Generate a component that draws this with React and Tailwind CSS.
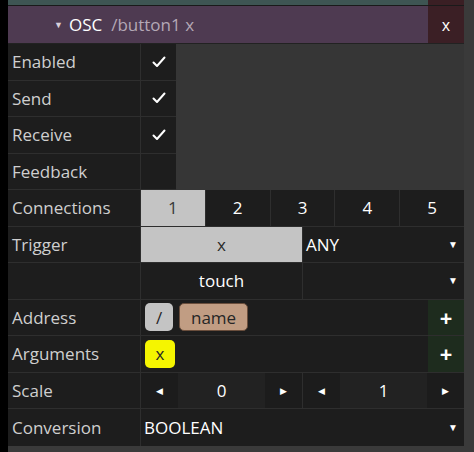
import React from 'react';

const font = { fontFamily: '"Open Sans", "Noto Sans", sans-serif' };

function Label({ children }) {
  return (
    <div className="w-[133px] shrink-0 flex items-center pl-[4px] bg-[#1d1d1d] text-[#cfcfcf] text-[17px] border-r border-[#2e2e2e]">
      {children}
    </div>
  );
}

function Row({ label, children, last }) {
  return (
    <div className={'flex h-[36.5px] ' + (last ? '' : 'border-b border-[#2e2e2e]')}>
      <Label>{label}</Label>
      <div className="flex-1 flex min-w-0">{children}</div>
    </div>
  );
}

function Caret() {
  return <span className="text-[10px] text-white">▼</span>;
}

function Select({ value, className = '' }) {
  return (
    <div className={'flex items-center justify-between pl-[3px] pr-[6px] bg-[#1d1d1d] text-white text-[17px] ' + className}>
      <span>{value}</span>
      <Caret />
    </div>
  );
}

function Stepper({ value }) {
  return (
    <div className="flex-1 flex">
      <div className="w-[37px] flex items-center justify-center bg-[#1c1c1c] text-white text-[9px]">◀</div>
      <div className="flex-1 flex items-center justify-center bg-[#222222] text-white text-[17px]">{value}</div>
      <div className="w-[37px] flex items-center justify-center bg-[#1c1c1c] text-white text-[9px]">▶</div>
    </div>
  );
}

function Check() {
  return (
    <svg width="14" height="12" viewBox="0 0 14 12" fill="none">
      <path d="M1.5 6.5 L5 10 L12.5 1.5" stroke="white" strokeWidth="2" strokeLinecap="round" strokeLinejoin="round" />
    </svg>
  );
}

function CheckRow({ label, checked }) {
  return (
    <div className="flex h-[36.5px]">
      <div className="flex border-b border-[#2e2e2e]">
        <Label>{label}</Label>
        <div className="w-[35px] flex items-center justify-center bg-[#1d1d1d]">
          {checked ? <Check /> : null}
        </div>
      </div>
      <div className="flex-1 bg-[#363636]" />
    </div>
  );
}

export default function App() {
  return (
    <div className="w-[474px] h-[452px] bg-black flex overflow-hidden" style={font}>
      <div className="w-[8px] shrink-0 bg-black" />
      <div className="w-[456px] shrink-0 flex flex-col">
        <div className="h-[6px] flex border-b border-[#1a1a1a]">
          <div className="flex-1 bg-[#3e5553]" />
          <div className="w-[36px] bg-[#3a1f24]" />
        </div>
        <div className="h-[38px] flex bg-[#4e3a51] border-b border-[#222]">
          <div className="flex-1 flex items-center pl-[46px] gap-[6px]">
            <span className="text-[9px] text-[#d8d0da]">▼</span>
            <span className="text-[17px] text-white">OSC</span>
            <span className="text-[17px] text-[#b4a8b6] ml-[3px]">/button1 x</span>
          </div>
          <div className="w-[36px] flex items-center justify-center bg-[#3b1f25] text-white text-[16px]">x</div>
        </div>

        <CheckRow label="Enabled" checked />
        <CheckRow label="Send" checked />
        <CheckRow label="Receive" checked />
        <CheckRow label="Feedback" />

        <Row label="Connections">
          <div className="flex-1 grid grid-cols-5 gap-px bg-[#2e2e2e]">
            {[1, 2, 3, 4, 5].map((n) => (
              <div
                key={n}
                className={
                  'flex items-center justify-center text-[17px] ' +
                  (n === 1 ? 'bg-[#c4c4c4] text-[#3a3a3a]' : 'bg-[#1d1d1d] text-white')
                }
              >
                {n}
              </div>
            ))}
          </div>
        </Row>

        <Row label="Trigger">
          <div className="w-[161px] flex items-center justify-center bg-[#c4c4c4] text-[#2a2a2a] text-[17px]">x</div>
          <Select value="ANY" className="flex-1 border-l border-[#2e2e2e]" />
        </Row>

        <Row label="">
          <div className="w-[161px] flex items-center justify-center bg-[#1d1d1d] text-white text-[17px]">touch</div>
          <Select value="" className="flex-1 border-l border-[#2e2e2e]" />
        </Row>

        <Row label="Address">
          <div className="flex-1 flex items-center gap-[6px] pl-[4px] bg-[#1d1d1d]">
            <span className="h-[28px] w-[28px] flex items-center justify-center rounded-[5px] bg-[#c4c4c4] text-[#262626] text-[17px]">/</span>
            <span className="h-[28px] px-[11px] flex items-center rounded-[5px] bg-[#c19d83] border border-[#6a4e3c] text-[#262626] text-[17px]">name</span>
          </div>
          <div className="w-[36px] flex items-center justify-center bg-[#1e2c1e] text-white text-[22px] font-bold">+</div>
        </Row>

        <Row label="Arguments">
          <div className="flex-1 flex items-center pl-[4px] bg-[#1d1d1d]">
            <span className="h-[28px] w-[30px] flex items-center justify-center rounded-[5px] bg-[#f5f500] text-[#262626] text-[17px]">x</span>
          </div>
          <div className="w-[36px] flex items-center justify-center bg-[#1e2c1e] text-white text-[22px] font-bold">+</div>
        </Row>

        <Row label="Scale">
          <Stepper value="0" />
          <div className="w-px bg-[#2e2e2e]" />
          <Stepper value="1" />
        </Row>

        <Row label="Conversion" last>
          <Select value="BOOLEAN" className="flex-1" />
        </Row>

        <div className="flex-1 bg-[#3a3a3a]" />
      </div>
      <div className="flex-1 bg-[#3a3a3a]" />
    </div>
  );
}
